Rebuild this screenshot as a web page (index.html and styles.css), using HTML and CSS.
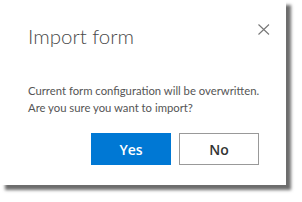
FILE: index.html
```html
<!DOCTYPE html>
<html>
<head>
<meta charset="utf-8">
<link rel="stylesheet" href="styles.css">
</head>
<body>
<div class="dialog">
  <div class="header">
    <h1 class="title">Import form</h1>
    <button class="close" aria-label="Close">
      <svg width="12" height="11" viewBox="0 0 12 11"><path d="M0.5 0.5 L11 10.5 M11 0.5 L0.5 10.5" stroke="#777" stroke-width="1.1" fill="none"/></svg>
    </button>
  </div>
  <p class="message">Current form configuration will be overwritten.<br>Are you sure you want to import?</p>
  <div class="actions">
    <button class="btn primary">Yes</button>
    <button class="btn">No</button>
  </div>
</div>
</body>
</html>
```
FILE: styles.css
```css
html, body {
  margin: 0;
  padding: 0;
  background: #fff;
}
body {
  width: 302px;
  height: 202px;
  overflow: hidden;
  font-family: "Lato", "Open Sans", sans-serif;
}
.dialog {
  width: 286px;
  height: 185px;
  box-sizing: border-box;
  background: #fff;
  box-shadow: 5px 5px 3px rgba(60, 60, 60, 0.75);
  padding: 0 27px 0 28px;
  display: flex;
  flex-direction: column;
}
.header {
  display: flex;
  justify-content: space-between;
  align-items: flex-start;
  padding-top: 22px;
}
.title {
  margin: 0;
  font-size: 20.5px;
  font-weight: 300;
  line-height: 28px;
  color: #4a4a4a;
}
.close {
  border: 0;
  background: none;
  padding: 0;
  margin: 2px -11px 0 0;
  width: 12px;
  height: 11px;
  display: flex;
}
.message {
  margin: 32px 0 0 0;
  font-size: 11.3px;
  line-height: 17px;
  color: #555;
  white-space: nowrap;
}
.actions {
  display: flex;
  justify-content: flex-end;
  gap: 8px;
  margin-top: 17px;
}
.btn {
  width: 80px;
  height: 32px;
  box-sizing: border-box;
  border: 1px solid #999;
  background: #fff;
  color: #333;
  font-family: "Open Sans", "Lato", sans-serif;
  font-size: 14px;
  font-weight: 600;
  padding: 0;
}
.btn.primary {
  background: #0078d4;
  border-color: #0078d4;
  color: #fff;
}
```
